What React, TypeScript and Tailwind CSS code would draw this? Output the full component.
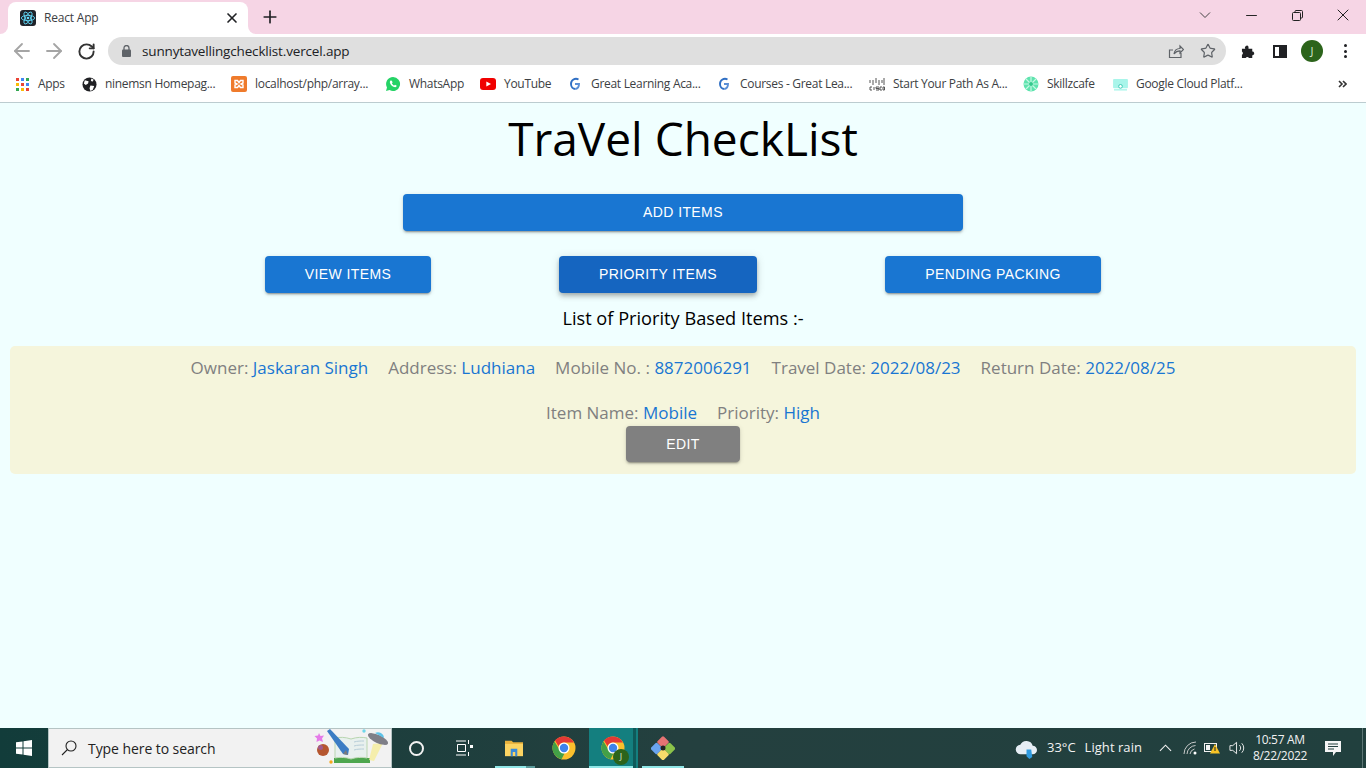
import { ArrowLeft, ArrowRight, Minus, Plus, RotateCw, Star, X } from "lucide-react";

const ui = "font-['Open_Sans','Noto_Sans',sans-serif]";

function ReactIcon() {
  return (
    <span className="flex h-4 w-4 items-center justify-center rounded-[3px] bg-[#20232a]">
      <svg viewBox="0 0 24 24" className="h-4 w-4" fill="none" stroke="#61dafb" strokeWidth="1.3">
        <circle cx="12" cy="12" r="2" fill="#61dafb" stroke="none" />
        <ellipse cx="12" cy="12" rx="10" ry="4" />
        <ellipse cx="12" cy="12" rx="10" ry="4" transform="rotate(60 12 12)" />
        <ellipse cx="12" cy="12" rx="10" ry="4" transform="rotate(120 12 12)" />
      </svg>
    </span>
  );
}

function AppsIcon() {
  const colors = ["#ea4335", "#4285f4", "#34a853", "#fbbc05", "#ea4335", "#4285f4", "#34a853", "#fbbc05", "#ea4335"];
  return (
    <span className="grid h-[13px] w-[13px] grid-cols-3 gap-[2px]">
      {colors.map((c, i) => (
        <span key={i} style={{ background: c }} />
      ))}
    </span>
  );
}

function GlobeIcon() {
  return (
    <svg viewBox="0 0 16 16" className="h-[15px] w-[15px]">
      <circle cx="8" cy="8" r="7.5" fill="#202124" />
      <path d="M3 3.5 7 4.5 6.5 7 4 8.5 2 7ZM9 9l4 .5-1.5 4-2.5 1.5L8 12Z" fill="#fff" />
      <path d="M10 1.5 12.5 3 11 5 9.5 4Z" fill="#fff" />
    </svg>
  );
}

function XamppIcon() {
  return (
    <svg viewBox="0 0 16 16" className="h-4 w-4">
      <rect width="16" height="16" rx="2" fill="#ef7b2c" />
      <path d="M4 4.5h2.5L8 6.5l1.5-2H12v2.500l-2 1 2 1v2.500H9.500L8 9.500l-1.500 2H4V9l2-1-2-1Z" fill="none" stroke="#fff" strokeWidth="1.4" />
    </svg>
  );
}

function WhatsAppIcon() {
  return (
    <svg viewBox="0 0 16 16" className="h-4 w-4">
      <path d="M8 1a7 7 0 0 0-6 10.500L1 15l3.600-.9A7 7 0 1 0 8 1Z" fill="#25d366" />
      <path d="M5.600 4.500c-.8.600-1 1.700-.4 3 .8 1.700 2.200 3 3.900 3.600 1.200.4 2.100 0 2.500-.9l-.1-.7-1.500-.8-.8.8c-1-.4-1.900-1.300-2.300-2.300l.7-.8-.7-1.700Z" fill="#fff" />
    </svg>
  );
}

function YouTubeIcon() {
  return (
    <svg viewBox="0 0 16 12" className="h-[12px] w-4">
      <rect width="16" height="12" rx="3" fill="#f00000" />
      <path d="M6.300 3.500 11 6l-4.700 2.500Z" fill="#fff" />
    </svg>
  );
}

function GreatLearningIcon() {
  return (
    <svg viewBox="0 0 16 16" className="h-4 w-4" fill="none" strokeWidth="1.9">
      <path d="M11.500 3.500A5 5 0 0 0 4 8c0 3 2 5 4.500 5" stroke="#2f6fc4" />
      <path d="M8 8h4c0 2.500-1.300 4.500-3.500 5" stroke="#5b8fd6" />
    </svg>
  );
}

function CiscoIcon() {
  return (
    <span className="flex h-4 w-4 flex-col items-center justify-center">
      <svg viewBox="0 0 16 7" className="h-[7px] w-4" stroke="#555" strokeWidth="1">
        {[1, 4, 7, 10, 13, 15].map((x, i) => (
          <line key={x} x1={x} x2={x} y1={i % 3 === 2 ? 0 : 2} y2={i % 2 ? 7 : 5} />
        ))}
      </svg>
      <svg viewBox="0 0 16 5" className="mt-px h-[5px] w-4" fill="none" stroke="#555" strokeWidth="1">
        <path d="M3 1H1v3h2M5 1v3M10 1H7v1.500h3V4H7M13 1h-2v3h2M14 1h1.500v3H14Z" />
      </svg>
    </span>
  );
}

function SkillzIcon() {
  return (
    <svg viewBox="0 0 16 16" className="h-4 w-4">
      <circle cx="8" cy="8" r="7.500" fill="#5fe3ae" />
      <path d="M8 1v14M1 8h14M3 3l10 10M13 3 3 13" stroke="#c7f8e3" strokeWidth="1.200" />
      <circle cx="8" cy="8" r="2" fill="#35c98d" />
    </svg>
  );
}

function CloudPlatformIcon() {
  return (
    <svg viewBox="0 0 16 14" className="h-[13px] w-[15px]">
      <rect width="16" height="10" y="1" rx="1" fill="#a9f5ea" />
      <rect x="1" y="12" width="14" height="1.500" fill="#a9f5ea" />
      <circle cx="8" cy="9" r="2" fill="#fff" stroke="#38c9b4" />
    </svg>
  );
}

const bookmarks = [
  { label: "Apps", icon: <AppsIcon />, w: "w-[81px]", gap: "pl-[14px]" },
  { label: "ninemsn Homepag...", icon: <GlobeIcon />, w: "w-[150px]", gap: "" },
  { label: "localhost/php/array...", icon: <XamppIcon />, w: "w-[154px]", gap: "" },
  { label: "WhatsApp", icon: <WhatsAppIcon />, w: "w-[95px]", gap: "" },
  { label: "YouTube", icon: <YouTubeIcon />, w: "w-[87px]", gap: "" },
  { label: "Great Learning Aca...", icon: <GreatLearningIcon />, w: "w-[149px]", gap: "" },
  { label: "Courses - Great Lea...", icon: <GreatLearningIcon />, w: "w-[153px]", gap: "" },
  { label: "Start Your Path As A...", icon: <CiscoIcon />, w: "w-[154px]", gap: "" },
  { label: "Skillzcafe", icon: <SkillzIcon />, w: "w-[89px]", gap: "" },
  { label: "Google Cloud Platf...", icon: <CloudPlatformIcon />, w: "w-[150px]", gap: "" },
];

function TabStrip() {
  return (
    <div className="flex h-[34px] shrink-0 items-end bg-[#f6d5e5] pl-2">
      <div className="relative flex h-8 w-[240px] items-center rounded-t-lg bg-white pl-3 pr-2">
        <span className="absolute bottom-0 left-[-8px] h-2 w-2 bg-white">
          <span className="block h-2 w-2 rounded-br-lg bg-[#f6d5e5]" />
        </span>
        <span className="absolute bottom-0 right-[-8px] h-2 w-2 bg-white">
          <span className="block h-2 w-2 rounded-bl-lg bg-[#f6d5e5]" />
        </span>
        <ReactIcon />
        <span className={`ml-2 text-[12px] tracking-[-0.2px] text-[#3c4043] ${ui}`}>React App</span>
        <X className="ml-auto text-[#202124]" size={16} strokeWidth={2.5} />
      </div>
      <Plus className="mb-[7px] ml-3 text-[#202124]" size={20} strokeWidth={2} />
      <div className="ml-auto flex h-[30px] self-start text-[#222]">
        <span className="flex w-[46px] items-center justify-center">
          <svg viewBox="0 0 12 8" className="h-2 w-3" fill="none" stroke="#444" strokeWidth="1">
            <path d="M1 1.500 6 6.500 11 1.500" />
          </svg>
        </span>
        <span className="flex w-[46px] items-center justify-center">
          <Minus size={17} strokeWidth={1.4} />
        </span>
        <span className="flex w-[46px] items-center justify-center">
          <svg viewBox="0 0 11 11" className="h-[11px] w-[11px]" fill="none" stroke="#222" strokeWidth="1">
            <rect x="0.500" y="2.500" width="8" height="8" rx="1" />
            <path d="M3 2.500V1.500a1 1 0 0 1 1-1h5.500a1 1 0 0 1 1 1V7a1 1 0 0 1-1 1h-1" />
          </svg>
        </span>
        <span className="flex w-[46px] items-center justify-center">
          <X size={20} strokeWidth={1.2} />
        </span>
      </div>
    </div>
  );
}

function Toolbar() {
  return (
    <div className="flex h-[34px] shrink-0 items-center bg-white">
      <span className="flex w-[38px] justify-end pr-1">
        <ArrowLeft className="text-[#a5a5a5]" size={24} strokeWidth={1.8} />
      </span>
      <span className="flex w-8 justify-center">
        <ArrowRight className="text-[#a5a5a5]" size={24} strokeWidth={1.8} />
      </span>
      <span className="flex w-8 justify-center">
        <RotateCw className="text-[#333]" size={19} strokeWidth={2.4} />
      </span>
      <div className="ml-[6px] flex h-7 w-[1118px] items-center rounded-full bg-[#dfdfdf] pl-[14px] pr-[10px]">
        <svg viewBox="0 0 9 12" className="h-3 w-[9px]" fill="#5f6368">
          <rect y="4.500" width="9" height="7.500" rx="1" />
          <path d="M2 5V3a2.500 2.500 0 0 1 5 0v2" fill="none" stroke="#5f6368" strokeWidth="1.300" />
        </svg>
        <span className={`ml-[11px] text-[13.500px] tracking-[-0.16px] text-[#202124] ${ui}`}>sunnytavellingchecklist.vercel.app</span>
        <svg viewBox="0 0 16 16" className="ml-auto h-4 w-4" fill="none" stroke="#5f6368" strokeWidth="1.200">
          <path d="M13 10v4.500H1.500V7H5M6 11c.5-3.500 3-5.500 6-5.500V3l3.500 3.500L12 10V7.800C9.500 7.800 7.500 9 6 11Z" />
        </svg>
        <Star className="ml-4 text-[#5f6368]" size={16} strokeWidth={1.8} />
      </div>
      <span className="ml-[14px] flex w-4 justify-center">
        <svg viewBox="0 0 16 16" className="h-[15px] w-[15px]" fill="#202124">
          <path d="M1 5h3.500a2 2 0 0 1 3.500-2.200V5h4v3a2 2 0 0 1 1 3.800 2 2 0 0 1-1 .2v3H8.500a2 2 0 0 0-3.500 0H1v-3.500a2 2 0 0 0 0-3.500Z" />
        </svg>
      </span>
      <span className="ml-4 flex w-4 justify-center">
        <span className="flex h-[13px] w-[14px] justify-end border-2 border-[#202124] bg-white">
          <span className="h-full w-[6px] bg-[#202124]" />
        </span>
      </span>
      <span className={`ml-[13px] flex h-[22px] w-[22px] items-center justify-center rounded-full bg-[#2c641b] text-[11px] text-[#d9e8d2] ${ui}`}>J</span>
      <span className="ml-[21px] flex flex-col gap-[2.500px]">
        <span className="h-[3px] w-[3px] rounded-full bg-[#202124]" />
        <span className="h-[3px] w-[3px] rounded-full bg-[#202124]" />
        <span className="h-[3px] w-[3px] rounded-full bg-[#202124]" />
      </span>
    </div>
  );
}

function BookmarksBar() {
  return (
    <div className={`flex h-[35px] shrink-0 items-center border-b border-[#bcccd0] bg-white pb-[2px] text-[12px] tracking-[-0.3px] text-[#3c4043] ${ui}`}>
      {bookmarks.map((b, i) => (
        <span key={b.label + i} className={`flex items-center gap-2 whitespace-nowrap ${b.w} ${b.gap}`}>
          <span className="flex w-4 justify-center">{b.icon}</span>
          <span>{b.label}</span>
        </span>
      ))}
      <svg viewBox="0 0 9 8" className="ml-auto mr-[19px] h-2 w-[9px]" fill="none" stroke="#333" strokeWidth="1.600">
        <path d="M1 1l3 3-3 3M5 1l3 3-3 3" />
      </svg>
    </div>
  );
}

function ActionButton({ label, width, active }: { label: string; width: string; active?: boolean }) {
  return (
    <button
      className={`h-[37px] rounded-[4px] font-['Liberation_Sans',sans-serif] text-[14px] tracking-[0.4px] text-white ${width} ${
        active
          ? "bg-[#1565c0] shadow-[0_2px_4px_-1px_rgba(0,0,0,0.2),0_4px_5px_0_rgba(0,0,0,0.14),0_1px_10px_0_rgba(0,0,0,0.12)]"
          : "bg-[#1976d2] shadow-[0_3px_1px_-2px_rgba(0,0,0,0.2),0_2px_2px_0_rgba(0,0,0,0.14),0_1px_5px_0_rgba(0,0,0,0.12)]"
      }`}
    >
      {label}
    </button>
  );
}

function Field({ label, value }: { label: string; value: string }) {
  return (
    <span className="whitespace-nowrap text-[#808080]">
      {label} <span className="text-[#1976d2]">{value}</span>
    </span>
  );
}

function MainPage() {
  return (
    <main className={`flex min-h-0 flex-1 flex-col items-center bg-[#f0ffff] ${ui}`}>
      <h1 className="mt-px h-[68px] text-[46px] leading-[68px] text-black">TraVel CheckList</h1>
      <div className="mt-[22px]">
        <ActionButton label="ADD ITEMS" width="w-[560px]" />
      </div>
      <div className="mt-[25px] flex justify-center gap-[128px]">
        <ActionButton label="VIEW ITEMS" width="w-[166px]" />
        <ActionButton label="PRIORITY ITEMS" width="w-[198px]" active />
        <ActionButton label="PENDING PACKING" width="w-[216px]" />
      </div>
      <p className="mt-3 h-[26px] text-[18.200px] leading-[26px] text-black">List of Priority Based Items :-</p>
      <section className="mt-[15px] flex h-[128px] w-[1346px] flex-col items-center rounded-[5px] bg-[#f5f5dc] text-[17px] leading-[24px]">
        <div className="mt-[10px] flex justify-center gap-5">
          <Field label="Owner:" value="Jaskaran Singh" />
          <Field label="Address:" value="Ludhiana" />
          <Field label="Mobile No. :" value="8872006291" />
          <Field label="Travel Date:" value="2022/08/23" />
          <Field label="Return Date:" value="2022/08/25" />
        </div>
        <div className="mt-[21px] flex justify-center gap-5">
          <Field label="Item Name:" value="Mobile" />
          <Field label="Priority:" value="High" />
        </div>
        <button className="mt-px h-[36px] w-[114px] rounded-[4px] bg-[#808080] font-['Liberation_Sans',sans-serif] text-[14px] tracking-[0.4px] text-white shadow-[0_3px_1px_-2px_rgba(0,0,0,0.2),0_2px_2px_0_rgba(0,0,0,0.14),0_1px_5px_0_rgba(0,0,0,0.12)]">
          EDIT
        </button>
      </section>
    </main>
  );
}

function ChromeLogo() {
  return (
    <svg viewBox="0 0 24 24" className="h-6 w-6">
      <circle cx="12" cy="12" r="11.500" fill="#fbc02d" />
      <path d="M12 .5A11.500 11.500 0 0 1 22 6.500H12a5.500 5.500 0 0 0-5.300 4L3 4.500A11.500 11.500 0 0 1 12 .5Z" fill="#e53935" />
      <path d="M2.500 5.500 8 14.500a5.500 5.500 0 0 0 4.500 3L9.500 23.200A11.500 11.500 0 0 1 2.500 5.500Z" fill="#43a047" />
      <circle cx="12" cy="12" r="5.500" fill="#fff" />
      <circle cx="12" cy="12" r="4.200" fill="#3f83ea" />
    </svg>
  );
}

function SearchArt() {
  return (
    <svg viewBox="0 0 80 38" className="absolute bottom-0 right-0 h-[38px] w-[80px]">
      <path d="M8 4l1.500 3 3.500-.5-2 3 1 3.500-3.500-1.500-3 1.500.5-3.500-2.500-2.500 3.500-.5Z" fill="#e57ae8" />
      <circle cx="12" cy="21" r="6" fill="#b5562f" />
      <circle cx="9.500" cy="18.500" r="2.500" fill="#a05a8c" />
      <circle cx="20" cy="33" r="1.700" fill="#f6a81c" />
      <path d="M23 29h36v5H23Z" fill="#4ea64e" />
      <path d="M24 9c5-1 10-1 16 1 6-2 11-2 16-1v20c-5-1-10-1-16 1-6-2-11-2-16-1Z" fill="#e8f0ee" stroke="#b9d6b0" />
      <path d="M43 13c3-1 7-1 10-1M43 17c3-1 7-1 10-1M43 21c3-1 7-1 10-1M29 21c3 0 5 0 8 1" stroke="#b7cdd8" strokeWidth="1" fill="none" />
      <path d="M16 2 19 0 38 20 37 26 32 25Z" fill="#3b7cc4" />
      <path d="M32 25 37 26 35 21Z" fill="#7a7a7a" />
      <circle cx="53" cy="2" r="1.700" fill="#6fd7ea" />
      <path d="M62 15l10-1-9 18-5-1Z" fill="#f6eda0" opacity="0.85" />
      <ellipse cx="67" cy="10" rx="11" ry="4" transform="rotate(25 67 10)" fill="#7f7f88" />
      <path d="M64 4a6 6 0 0 1 9 5Z" fill="#5ec3e8" />
    </svg>
  );
}

function Taskbar() {
  return (
    <div className={`flex h-10 shrink-0 items-stretch bg-gradient-to-r from-[#123c3a] via-[#24403f] to-[#21403e] text-white ${ui}`}>
      <span className="flex w-[48px] items-center justify-center">
        <svg viewBox="0 0 16 16" className="h-4 w-4" fill="#fff">
          <path d="M0 2.300 6.500 1.400V7.500H0ZM7.500 1.300 16 0V7.500H7.500ZM0 8.500H6.500V14.600L0 13.700ZM7.500 8.500H16V16L7.500 14.700Z" />
        </svg>
      </span>
      <div className="relative flex w-[344px] items-center border border-[#b5c4c4] bg-[#f2f2f2] pl-[12px]">
        <svg viewBox="0 0 16 16" className="h-4 w-4" fill="none" stroke="#222" strokeWidth="1.100">
          <circle cx="10" cy="6" r="5" />
          <path d="M6.500 9.500 1 15" />
        </svg>
        <span className="ml-[11px] text-[14px] tracking-[-0.07px] text-[#222]">Type here to search</span>
        <SearchArt />
      </div>
      <span className="flex w-[48px] items-center justify-center">
        <span className="h-[15px] w-[15px] rounded-full border-2 border-[#f2f2f2]" />
      </span>
      <span className="flex w-[48px] items-center justify-center">
        <svg viewBox="0 0 17 16" className="h-4 w-[17px]" fill="none" stroke="#fff" strokeWidth="1">
          <path d="M0 1h10M0 15h10M1.500 4.500h8v7h-8ZM12.500 0v4M12.500 12v4" />
          <rect x="14" y="5" width="3" height="3" fill="#fff" stroke="none" />
        </svg>
      </span>
      <span className="relative ml-[2px] flex w-[48px] items-center justify-center">
        <svg viewBox="0 0 24 22" className="h-[18px] w-5">
          <path d="M1 2h8l2 2h12v3H1Z" fill="#e9b23c" />
          <path d="M1 6h22v15H1Z" fill="#fcd462" />
          <path d="M8 12h8v9h-2.500v-5h-3v5H8Z" fill="#3b8bd8" />
        </svg>
        <span className="absolute bottom-0 left-[5px] h-[2px] w-[31px] bg-[#8fe6e6]" />
        <span className="absolute bottom-0 left-[36px] h-[2px] w-[9px] bg-[#5a9a9a]" />
      </span>
      <span className="ml-[2px] flex w-[48px] items-center justify-center">
        <ChromeLogo />
      </span>
      <span className="relative ml-[1px] flex w-[44px] items-center justify-center bg-[#147f7f] pl-1">
        <ChromeLogo />
        <span className="absolute bottom-[3px] right-[4px] flex h-4 w-4 items-center justify-center rounded-full bg-[#2c641b] text-[9px] text-[#d9e8d2]">J</span>
        <span className="absolute bottom-0 left-0 h-[2px] w-full bg-[#8fe6e6]" />
      </span>
      <span className="w-[3px] bg-[#0f5a5a]" />
      <span className="w-[2px] bg-[#147f7f]" />
      <span className="relative ml-[4px] flex w-[42px] items-center justify-center">
        <svg viewBox="0 0 24 24" className="h-6 w-6">
          <rect x="7.500" y="1.500" width="9" height="9" rx="1.500" transform="rotate(45 12 6)" fill="#e57373" />
          <rect x="1" y="8" width="9" height="9" rx="1.500" transform="rotate(45 5.500 12.500)" fill="#6aa4f0" />
          <rect x="14" y="8" width="9" height="9" rx="1.500" transform="rotate(45 18.500 12.500)" fill="#8bc34a" />
          <rect x="7.500" y="14" width="9" height="9" rx="1.500" transform="rotate(45 12 18.500)" fill="#f6dc6b" />
          <circle cx="12" cy="12" r="2.500" fill="#222" />
        </svg>
        <span className="absolute bottom-0 left-0 h-[2px] w-full bg-[#8fe6e6]" />
      </span>
      <div className="ml-auto flex items-center text-[13px] text-[#f2f2f2]">
        <svg viewBox="0 0 24 22" className="h-[21px] w-[23px]">
          <path d="M6 17a5 5 0 0 1-.5-10A7 7 0 0 1 18.500 8a4.500 4.500 0 0 1 0 9Z" fill="#e6eef5" />
          <path d="M12 12h5l1 8-3 2-3-3Z" fill="#2f9be0" />
        </svg>
        <span className="ml-[9px]">33°C</span>
        <span className="ml-[9px] tracking-[0.05px]">Light rain</span>
        <svg viewBox="0 0 14 8" className="ml-[17px] h-2 w-[13px]" fill="none" stroke="#f2f2f2" strokeWidth="1.200">
          <path d="M1 7 7 1l6 6" />
        </svg>
        <svg viewBox="0 0 14 14" className="ml-[11px] h-[14px] w-[14px]" fill="none" stroke="#d8d8d8" strokeWidth="0.900">
          <path d="M1 13A12 12 0 0 1 13 1M4 13A9 9 0 0 1 12.500 4.500M7 13a6 6 0 0 1 4.500-5" />
          <circle cx="12" cy="12" r="1.500" fill="#fff" stroke="none" />
        </svg>
        <svg viewBox="0 0 16 12" className="ml-[7px] h-3 w-4">
          <rect x="0.500" y="1.500" width="12" height="8" fill="none" stroke="#f2f2f2" />
          <rect x="2" y="3" width="4" height="5" fill="#f2f2f2" />
          <path d="M11 2 16 11.500H6Z" fill="#f7c325" />
          <rect x="10.500" y="5" width="1" height="4" fill="#222" />
        </svg>
        <svg viewBox="0 0 18 16" className="ml-[9px] h-4 w-[17px]" fill="none" stroke="#f2f2f2" strokeWidth="1">
          <path d="M1 5.500h3L8 2v12l-4-3.500H1ZM11 5a4 4 0 0 1 0 6M13.500 3a7 7 0 0 1 0 10" />
        </svg>
        <span className="ml-2 flex w-[52px] flex-col items-center text-[12px] leading-[16px] tracking-[-0.3px] whitespace-nowrap">
          <span>10:57 AM</span>
          <span>8/22/2022</span>
        </span>
        <svg viewBox="0 0 16 15" className="ml-[19px] h-[15px] w-4" fill="#f5f5f5">
          <path d="M0 0h16v11h-5l-3 4v-4H0Z" />
          <path d="M3 3h10M3 5.500h10M3 8h6" stroke="#24403f" strokeWidth="1" />
        </svg>
        <span className="ml-[21px] mr-[3px] h-full w-px bg-[#5d7675]" />
      </div>
    </div>
  );
}

export default function App() {
  return (
    <div className="flex h-screen w-full flex-col overflow-hidden">
      <TabStrip />
      <Toolbar />
      <BookmarksBar />
      <MainPage />
      <Taskbar />
    </div>
  );
}
